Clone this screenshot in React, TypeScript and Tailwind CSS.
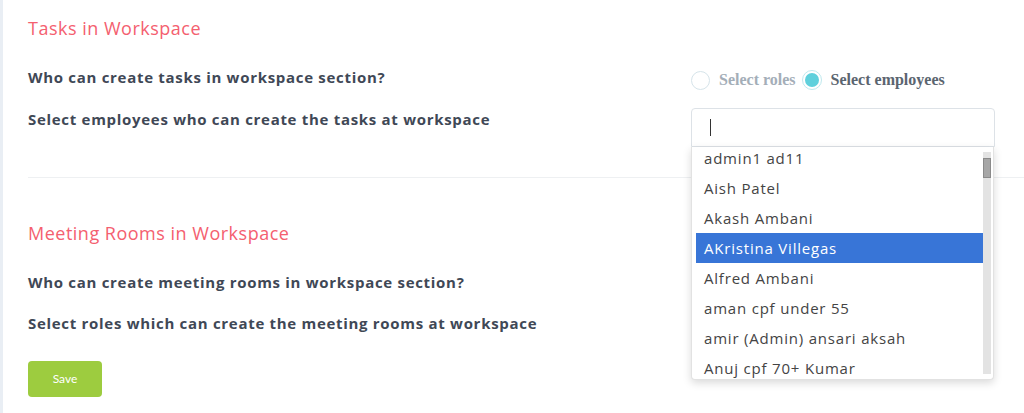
const employees = [
  "admin1 ad11",
  "Aish Patel",
  "Akash Ambani",
  "AKristina Villegas",
  "Alfred Ambani",
  "aman cpf under 55",
  "amir (Admin) ansari aksah",
  "Anuj cpf 70+ Kumar",
];

function Radio({ checked, label }: { checked?: boolean; label: string }) {
  return (
    <label className="flex items-center gap-[9px]">
      {checked ? (
        <span className="flex h-[20px] w-[20px] items-center justify-center rounded-full border border-[#bfe9ee] bg-white">
          <span className="h-[14px] w-[14px] rounded-full bg-[#5fd0dc]" />
        </span>
      ) : (
        <span className="h-[19px] w-[19px] rounded-full border border-[#d6e4ea] bg-white" />
      )}
      <span
        className={
          "font-['Liberation_Serif',serif] text-[16px] font-bold leading-[20px] " +
          (checked ? "text-[#5b6570]" : "text-[#a4aeb8]")
        }
      >
        {label}
      </span>
    </label>
  );
}

function Label({ children }: { children: React.ReactNode }) {
  return (
    <p className="text-[15px] font-bold leading-[22px] tracking-[0.7px] text-[#3f4856]">
      {children}
    </p>
  );
}

function Heading({ children }: { children: React.ReactNode }) {
  return (
    <h2 className="text-[18px] leading-[24px] tracking-[0.5px] text-[#f4606f]">{children}</h2>
  );
}

export default function App() {
  return (
    <div className="relative h-[413px] w-full overflow-hidden border-l-[3px] border-[#e9eef4] bg-white font-['Open_Sans',sans-serif]">
      <section className="pl-[25px] pt-[16px]">
        <Heading>Tasks in Workspace</Heading>

        <div className="mt-[26px] flex items-start justify-between pr-[29px]">
          <Label>Who can create tasks in workspace section?</Label>
          <div className="flex w-[304px] items-center gap-[6px] pt-[4px]">
            <Radio label="Select roles" />
            <Radio checked label="Select employees" />
          </div>
        </div>

        <div className="mt-[18px] flex items-start justify-between pr-[29px]">
          <Label>Select employees who can create the tasks at workspace</Label>
          <div className="flex h-[39px] w-[304px] items-center rounded-t-[4px] border border-[#dde2e7] px-[18px]">
            <span className="h-[17px] w-px bg-[#333]" />
          </div>
        </div>

        <div className="mt-[30px] border-t border-[#eef0f2]" />

        <div className="mt-[43px]">
          <Heading>Meeting Rooms in Workspace</Heading>
        </div>
        <div className="mt-[26px]">
          <Label>Who can create meeting rooms in workspace section?</Label>
        </div>
        <div className="mt-[19px]">
          <Label>Select roles which can create the meeting rooms at workspace</Label>
        </div>

        <button className="mt-[27px] h-[36px] w-[74px] rounded-[4px] bg-[#9dcc3f] font-['Lato',sans-serif] text-[12px] text-white">
          Save
        </button>
      </section>

      <div className="absolute left-[688px] top-[147px] flex h-[233px] w-[303px] overflow-hidden rounded-b-[4px] border border-t-0 border-[#e2e2e2] bg-white pl-[4px] shadow-[0_3px_8px_rgba(0,0,0,0.15)]">
        <ul className="-mt-[4px] flex-1">
          {employees.map((name) => (
            <li
              key={name}
              className={
                "h-[30px] px-[8px] text-[15px] leading-[30px] tracking-[0.8px] " +
                (name === "AKristina Villegas" ? "bg-[#3875d7] text-white" : "text-[#444]")
              }
            >
              {name}
            </li>
          ))}
        </ul>
        <div className="mb-[5px] mr-[2px] mt-[5px] w-[8px] bg-[#e3e3e3]">
          <div className="mt-[6px] h-[20px] w-[8px] border border-[#8a8a8a] bg-[#a6a6a6]" />
        </div>
      </div>
    </div>
  );
}
